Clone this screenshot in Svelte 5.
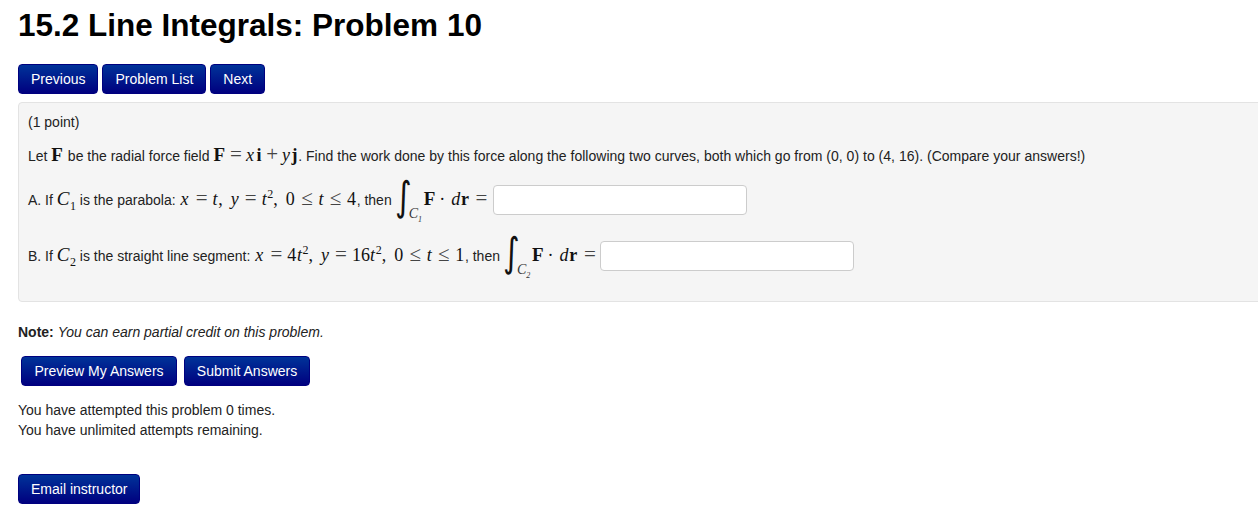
<script>
	const navButtons = ['Previous', 'Problem List', 'Next'];
</script>

<main class="page">
	<h1>15.2 Line Integrals: Problem 10</h1>

	<nav class="nav-row">
		{#each navButtons as label}
			<button class="btn">{label}</button>
		{/each}
	</nav>

	<section class="problem">
		<p class="point">(1 point)</p>

		<p class="intro">
			Let <b class="m cap">F</b> be the radial force field
			<span class="math"><b class="m cap">F</b><span class="rel">=</span><i class="m wide">x</i><b class="m">i</b><span class="rel">+</span><i class="m y">y</i><b class="m">j</b></span><span class="rest">. Find the work done by this force along the following two curves, both which go from (0, 0) to (4, 16). (Compare your answers!)</span>
		</p>

		<div class="part part-a">
			<span class="lead">A. If <span class="math"><i class="m cap curve">C</i><sub>1</sub></span> is the parabola:</span>
			<span class="math formula"><i class="m wide">x</i><span class="rel">=</span><i class="m">t</i><span class="comma">,</span><i class="m y">y</i><span class="rel">=</span><i class="m">t</i><sup>2</sup><span class="comma">,</span><span class="m">0</span><span class="le">≤</span><i class="m">t</i><span class="le">≤</span><span class="m">4</span></span><span class="then">, then</span>
			<span class="integral"><span class="int">∫</span><i class="lower">C<sub>1</sub></i></span>
			<span class="math formula-end"><b class="m cap">F</b><span class="dot">·</span><i class="m">d</i><b class="m">r</b><span class="rel eq">=</span></span>
			<input class="answer" type="text" />
		</div>

		<div class="part part-b">
			<span class="lead">B. If <span class="math"><i class="m cap curve">C</i><sub>2</sub></span> is the straight line segment:</span>
			<span class="math formula"><i class="m wide">x</i><span class="rel">=</span><span class="m">4</span><i class="m">t</i><sup>2</sup><span class="comma">,</span><i class="m y">y</i><span class="rel">=</span><span class="m num">16</span><i class="m">t</i><sup>2</sup><span class="comma">,</span><span class="m">0</span><span class="le">≤</span><i class="m">t</i><span class="le">≤</span><span class="m">1</span></span><span class="then">, then</span>
			<span class="integral"><span class="int">∫</span><i class="lower">C<sub>2</sub></i></span>
			<span class="math formula-end"><b class="m cap">F</b><span class="dot">·</span><i class="m">d</i><b class="m">r</b><span class="rel eq">=</span></span>
			<input class="answer" type="text" />
		</div>
	</section>

	<p class="note"><b>Note:</b> <em>You can earn partial credit on this problem.</em></p>

	<div class="submit-row">
		<button class="btn preview">Preview My Answers</button>
		<button class="btn submit">Submit Answers</button>
	</div>

	<p class="attempts">You have attempted this problem 0 times.<br />You have unlimited attempts remaining.</p>

	<button class="btn email">Email instructor</button>
</main>

<style>
	:global(body) {
		margin: 0;
		background: #ffffff;
		overflow: hidden;
	}

	.page {
		height: 532px;
		box-sizing: border-box;
		padding: 0 0 0 18px;
		overflow: hidden;
		font-family: 'Liberation Sans', Arial, sans-serif;
		font-size: 14px;
		line-height: 20px;
		color: #222222;
	}

	h1 {
		margin: 0;
		padding-top: 5px;
		font-size: 31.5px;
		line-height: 40px;
		font-weight: 700;
		color: #000000;
	}

	.nav-row {
		display: flex;
		gap: 4px;
		margin-top: 19px;
	}

	.btn {
		height: 30px;
		padding: 0 12px;
		border: 1px solid #00007f;
		border-radius: 4px;
		background: linear-gradient(to bottom, #003399, #00007f);
		color: #ffffff;
		font-family: inherit;
		font-size: 14px;
		line-height: 20px;
	}

	.problem {
		box-sizing: border-box;
		width: 1300px;
		height: 200px;
		margin-top: 8px;
		padding: 9px;
		background: #f5f5f5;
		border: 1px solid #e3e3e3;
		border-radius: 4px;
	}

	.problem p {
		margin: 0;
	}

	.intro {
		margin-top: 14px !important;
		white-space: nowrap;
	}

	.intro .wide {
		letter-spacing: 2.5px;
	}

	.intro .y {
		letter-spacing: 1.5px;
	}

	.intro .rel {
		margin-right: 3px;
	}

	.rest {
		letter-spacing: 0.015px;
	}

	.part {
		display: flex;
		align-items: center;
		height: 30px;
		white-space: pre;
	}

	.part-a {
		margin-top: 19px;
	}

	.part-b {
		margin-top: 26px;
	}

	.formula {
		margin-left: 5px;
		margin-top: -2px;
		line-height: 20px;
	}

	.formula-end {
		margin-top: -2px;
		line-height: 20px;
	}

	.math {
		font-family: 'Liberation Serif', 'Times New Roman', serif;
		font-size: 18px;
		color: #111111;
	}

	.intro .math,
	.lead .math {
		line-height: 0;
	}

	.m {
		font-family: 'Liberation Serif', 'Times New Roman', serif;
		font-size: 18px;
		line-height: 0;
		letter-spacing: 0.6px;
		color: #111111;
	}

	.cap {
		font-size: 19px;
		letter-spacing: 1px;
	}

	.curve {
		letter-spacing: 0.5px;
	}

	.wide {
		letter-spacing: 3px;
	}

	.y {
		letter-spacing: 2px;
	}

	.num {
		letter-spacing: 0;
	}

	.rel,
	.le {
		display: inline-block;
		width: 14px;
		margin: 0 4px 0 3px;
		font-size: 21px;
		line-height: 0;
		text-align: center;
		color: #444444;
	}

	.le {
		width: 13px;
		margin: 0 5px;
	}

	.eq {
		margin: 0 0 0 5px;
	}

	.comma {
		margin-right: 8px;
	}

	.dot {
		margin: 0 6px 0 3px;
	}

	.math sub,
	.math sup {
		font-size: 12px;
		line-height: 0;
	}

	.integral {
		display: inline-flex;
		align-items: flex-start;
		height: 48px;
		margin: 0 6px 0 3px;
		position: relative;
		width: 23px;
	}

	.int {
		display: inline-block;
		font-family: 'DejaVu Sans', sans-serif;
		font-size: 40px;
		line-height: 40px;
		font-style: italic;
		color: #111111;
		transform: scaleX(0.8);
		transform-origin: left center;
	}

	.lower {
		position: absolute;
		left: 14px;
		bottom: 4px;
		font-family: 'Liberation Serif', serif;
		font-size: 14px;
		line-height: 12px;
		color: #333333;
	}

	.lower sub {
		font-size: 8px;
		line-height: 0;
	}

	.answer {
		box-sizing: border-box;
		width: 254px;
		height: 30px;
		margin-left: 4px;
		background: #ffffff;
		border: 1px solid #cccccc;
		border-radius: 4px;
	}

	.part-b .answer {
		margin-left: 3px;
	}

	.note {
		margin: 20px 0 0;
	}

	.submit-row {
		display: flex;
		gap: 7px;
		margin: 14px 0 0 3px;
	}

	.preview {
		width: 156px;
		padding: 0;
	}

	.submit {
		width: 126px;
		padding: 0;
	}

	.attempts {
		margin: 14px 0 0;
	}

	.email {
		display: block;
		margin-top: 34px;
	}
</style>
